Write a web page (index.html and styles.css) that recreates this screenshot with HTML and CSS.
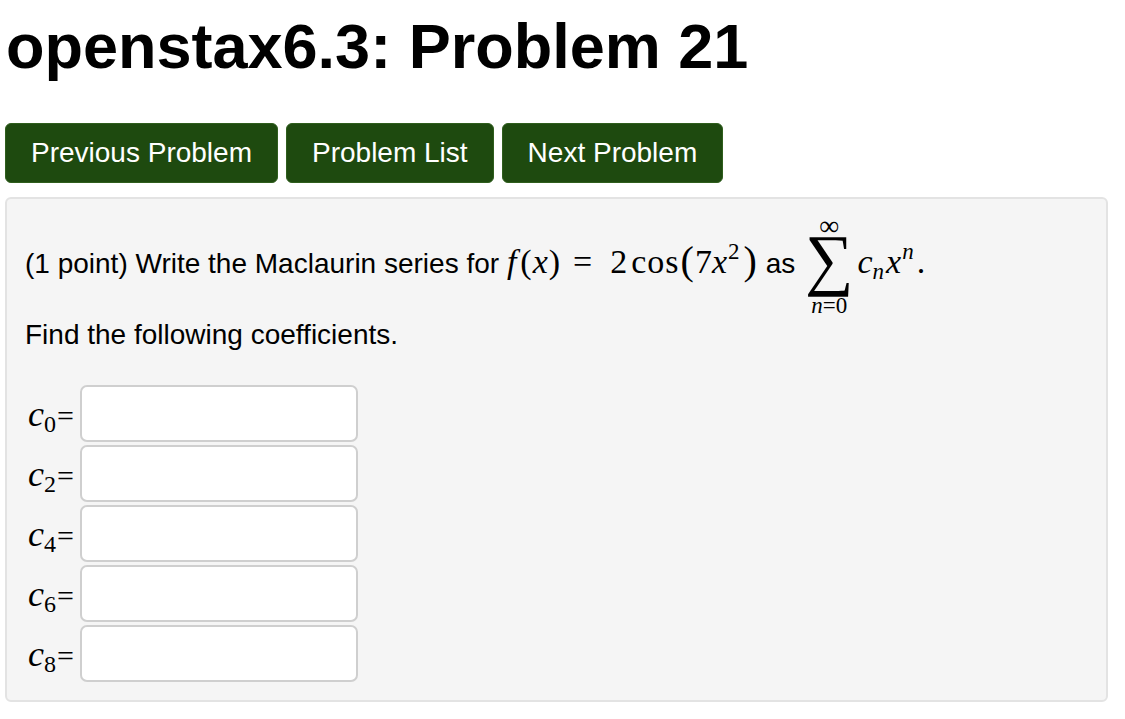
FILE: index.html
```html
<!DOCTYPE html>
<html lang="en">
<head>
  <meta charset="UTF-8" />
  <title>openstax6.3: Problem 21</title>
  <link rel="stylesheet" href="styles.css">
</head>
<body>

  <h1 class="page-title">openstax6.3: Problem 21</h1>

  <!-- Navigation -->
  <div class="nav-buttons">
    <a href="#" class="nav-btn">Previous Problem</a>
    <a href="#" class="nav-btn">Problem List</a>
    <a href="#" class="nav-btn">Next Problem</a>
  </div>

  <!-- Problem -->
  <div class="problem-box">
    <p class="statement">
      (1 point) Write the Maclaurin series for
      <span class="math"><i class="fn">f</i><span class="paren">(</span><i>x</i><span class="paren">)</span><span class="op">=</span>2<span class="fname">cos</span><span class="big-paren">(</span>7<i>x</i><sup>2</sup><span class="big-paren">)</span></span>
      as
      <span class="math"><span class="sum"><span class="sum-top">∞</span><span class="sum-sign">∑</span><span class="sum-bottom"><i>n</i>=0</span></span><i>c</i><sub><i>n</i></sub><i>x</i><sup><i>n</i></sup>.</span>
    </p>

    <p class="find">Find the following coefficients.</p>

    <div class="answers">
      <div class="answer-row">
        <label class="coef"><i>c</i><sub>0</sub><span class="eq">=</span></label>
        <input type="text" class="answer-input" />
      </div>
      <div class="answer-row">
        <label class="coef"><i>c</i><sub>2</sub><span class="eq">=</span></label>
        <input type="text" class="answer-input" />
      </div>
      <div class="answer-row">
        <label class="coef"><i>c</i><sub>4</sub><span class="eq">=</span></label>
        <input type="text" class="answer-input" />
      </div>
      <div class="answer-row">
        <label class="coef"><i>c</i><sub>6</sub><span class="eq">=</span></label>
        <input type="text" class="answer-input" />
      </div>
      <div class="answer-row">
        <label class="coef"><i>c</i><sub>8</sub><span class="eq">=</span></label>
        <input type="text" class="answer-input" />
      </div>
    </div>
  </div>

</body>
</html>
```

FILE: styles.css
```css
* {
  box-sizing: border-box;
  margin: 0;
  padding: 0;
}

body {
  font-family: 'Liberation Sans', Arial, sans-serif;
  background: #fff;
  color: #000;
  padding: 0 17px 0 5px;
}

.page-title {
  font-size: 63px;
  font-weight: bold;
  line-height: 68px;
  padding-top: 12px;
  padding-left: 1px;
}

/* Navigation */
.nav-buttons {
  display: flex;
  gap: 8px;
  margin-top: 43px;
}

.nav-btn {
  display: block;
  height: 60px;
  line-height: 58px;
  padding: 0 25px;
  background: #1e4a0f;
  border: 1px solid #2f5e1d;
  border-radius: 6px;
  color: #fff;
  font-size: 28px;
  text-decoration: none;
}

/* Problem Box */
.problem-box {
  margin-top: 14px;
  background: #f5f5f5;
  border: 2px solid #e3e3e3;
  border-radius: 6px;
  padding: 18px 18px 18px 18px;
}

.statement {
  font-size: 28px;
  line-height: 32px;
  white-space: nowrap;
}

.math {
  font-family: 'Liberation Serif', 'Times New Roman', serif;
  font-size: 34px;
}

.math i {
  font-style: italic;
}

.fn {
  margin: 0 3px 0 0;
}

.paren {
  margin: 0 1px;
}

.op {
  margin: 0 18px 0 12px;
}

.fname {
  margin-left: 4px;
  letter-spacing: 1px;
}

.math sup,
.math sub {
  font-size: 23px;
  line-height: 0;
}

.math sup {
  vertical-align: 14px;
  margin: 0 3px 0 1px;
}

.math sub {
  vertical-align: -6px;
  margin-right: 2px;
}

.big-paren {
  font-size: 40px;
  line-height: 0;
  display: inline-block;
  transform: translateY(1px);
  margin: 0 1px;
}

.sum {
  display: inline-flex;
  flex-direction: column;
  align-items: center;
  vertical-align: middle;
  margin: 0 4px 0 2px;
  height: 96px;
  position: relative;
  top: 2px;
}

.sum-top {
  font-size: 28px;
  line-height: 20px;
  transform: translateY(-3px);
}

.sum-sign {
  font-size: 68px;
  line-height: 54px;
  display: inline-block;
  transform: translateY(-7px);
}

.sum-bottom {
  font-size: 23px;
  line-height: 24px;
  transform: translateY(1px);
}

.find {
  font-size: 28px;
  line-height: 32px;
  margin-top: 6px;
}

/* Answers */
.answers {
  margin-top: 34px;
  display: flex;
  flex-direction: column;
  gap: 3px;
}

.answer-row {
  display: flex;
  align-items: center;
}

.coef {
  font-family: 'Liberation Serif', 'Times New Roman', serif;
  font-size: 36px;
  width: 55px;
  padding-left: 3px;
  white-space: nowrap;
}

.coef i {
  font-style: italic;
}

.coef sub {
  font-size: 24px;
  vertical-align: -6px;
  line-height: 0;
}

.coef .eq {
  font-size: 30px;
  margin-left: 1px;
}

.answer-input {
  width: 278px;
  height: 57px;
  border: 2px solid #cfcfcf;
  border-radius: 7px;
  background: #fff;
  font-size: 20px;
  padding: 0 10px;
  outline: none;
}
```
